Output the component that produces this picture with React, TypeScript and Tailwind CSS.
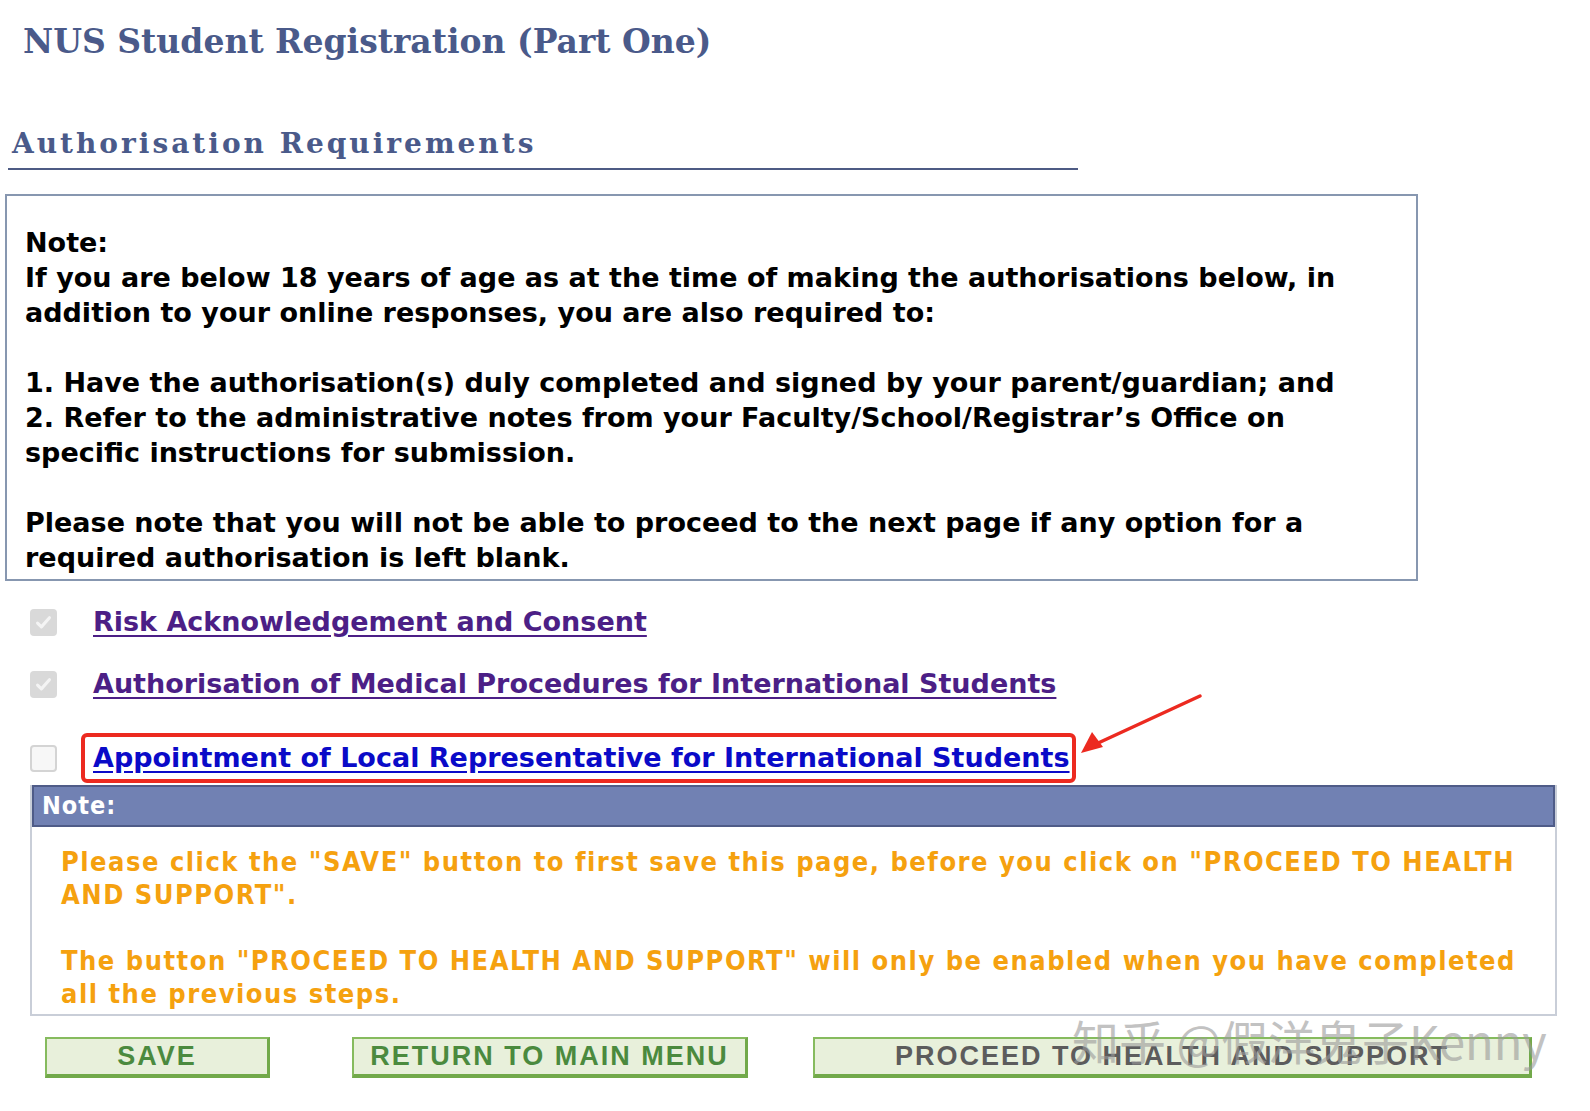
import React from 'react';

const verdana = { fontFamily: '"DejaVu Sans", Verdana, sans-serif' };
const georgia = { fontFamily: '"DejaVu Serif", Georgia, serif' };
const narrow = { fontFamily: '"DejaVu Sans Condensed", "DejaVu Sans", sans-serif' };

interface Item {
  label: string;
  done: boolean;
  highlight?: boolean;
}

const items: Item[] = [
  { label: 'Risk Acknowledgement and Consent', done: true },
  { label: 'Authorisation of Medical Procedures for International Students', done: true },
  { label: 'Appointment of Local Representative for International Students', done: false, highlight: true },
];

const CheckBox: React.FC<{ checked: boolean }> = ({ checked }) =>
  checked ? (
    <span className="flex h-[27px] w-[27px] items-center justify-center rounded-[4px] bg-[#d9d9d9]">
      <svg width="19" height="19" viewBox="0 0 16 16" fill="none">
        <path d="M3 8.5l3.2 3.2L13 4" stroke="#f4f4f4" strokeWidth="2.6" strokeLinecap="round" strokeLinejoin="round" />
      </svg>
    </span>
  ) : (
    <span className="block h-[27px] w-[27px] rounded-[4px] border-2 border-[#d4d4d4] bg-[#f7f7f7]" />
  );

const Btn: React.FC<{ label: string; w: string; disabled?: boolean }> = ({ label, w, disabled }) => (
  <div
    className={`flex h-[41px] ${w} items-center justify-center border-2 border-b-[4px] border-r-[3px] border-[#86bb5e] border-b-[#72a94a] border-r-[#72a94a] bg-[#e8f0db] text-[27px] font-bold tracking-[2px] ${
      disabled ? 'text-[#5c5c5c]' : 'text-[#4b8a3e]'
    }`}
    style={{ fontFamily: '"Liberation Sans Narrow", "Liberation Sans", Arial, sans-serif' }}
  >
    {label}
  </div>
);

export default function App() {
  return (
    <div className="relative h-[1111px] w-[1590px] overflow-hidden bg-white">
      <h1 className="pl-[23px] pt-[18px] text-[33px] font-bold leading-[48px] text-[#4a5a8a]" style={georgia}>
        NUS Student Registration (Part One)
      </h1>

      <h2
        className="mt-[58px] pl-[12px] text-[28px] font-bold leading-[40px] tracking-[3px] text-[#4a5a8a]"
        style={georgia}
      >
        Authorisation Requirements
      </h2>
      <div className="ml-[8px] mt-[4px] h-[2px] w-[1070px] bg-[#4e5b84]" />

      <div
        className="ml-[5px] mt-[24px] w-[1413px] border-2 border-[#8797b0] px-[18px] pb-[4px] pt-[29px] text-[27px] font-bold leading-[35px] text-black"
        style={verdana}
      >
        <p>Note:</p>
        <p>
          If you are below 18 years of age as at the time of making the authorisations below, in addition to your
          online responses, you are also required to:
        </p>
        <p className="mt-[35px]">1. Have the authorisation(s) duly completed and signed by your parent/guardian; and</p>
        <p>
          2. Refer to the administrative notes from your Faculty/School/Registrar’s Office on specific instructions for
          submission.
        </p>
        <p className="mt-[35px]">
          Please note that you will not be able to proceed to the next page if any option for a required authorisation
          is left blank.
        </p>
      </div>

      <div className="mt-[18px] flex flex-col gap-[16px] pl-[30px]" style={verdana}>
        {items.map(item => (
          <div key={item.label} className={`flex items-center ${item.highlight ? 'h-[50px] mt-[10px]' : 'h-[46px]'}`}>
            <CheckBox checked={item.done} />
            {item.highlight ? (
              <div className="ml-[24px] flex h-[50px] items-center rounded-[6px] border-[4px] border-[#ec2a20] pl-[8px] pr-[2px]">
                <a href="#" className="text-[27px] font-bold text-[#0a0ac8] underline underline-offset-[4px]">
                  {item.label}
                </a>
              </div>
            ) : (
              <a href="#" className="ml-[36px] text-[27px] font-bold text-[#4c1f86] underline underline-offset-[4px]">
                {item.label}
              </a>
            )}
          </div>
        ))}
      </div>

      <div className="ml-[30px] mt-[2px] w-[1527px] border-2 border-t-0 border-[#c9ced8]">
        <div
          className="flex h-[42px] items-center border-2 border-[#4f5c88] bg-[#7181b3] pl-[8px] text-[25px] font-bold tracking-[1px] text-white"
          style={narrow}
        >
          Note:
        </div>
        <div
          className="pb-[4px] pl-[29px] pr-[6px] pt-[18px] text-[27px] font-bold leading-[33px] tracking-[1.5px] text-[#f5a10f]"
          style={narrow}
        >
          <p>
            Please click the "SAVE" button to first save this page, before you click on "PROCEED TO HEALTH AND
            SUPPORT".
          </p>
          <p className="mt-[33px]">
            The button "PROCEED TO HEALTH AND SUPPORT" will only be enabled when you have completed all the previous
            steps.
          </p>
        </div>
      </div>

      <div className="mt-[21px] flex pl-[45px]">
        <Btn label="SAVE" w="w-[225px]" />
        <div className="ml-[82px]">
          <Btn label="RETURN TO MAIN MENU" w="w-[396px]" />
        </div>
        <div className="ml-[65px]">
          <Btn label="PROCEED TO HEALTH AND SUPPORT" w="w-[719px]" disabled />
        </div>
      </div>

      <svg className="pointer-events-none absolute left-[1070px] top-[684px]" width="140" height="80" viewBox="0 0 140 80">
        <path d="M130 12 L26 60" stroke="#ec2a20" strokeWidth="3.5" strokeLinecap="round" />
        <path d="M11 69 L22 48 L33 63 Z" fill="#ec2a20" />
      </svg>

      <div
        className="pointer-events-none absolute left-[1072px] top-[1010px] text-[47px] leading-[60px] text-[#9a9a9a] opacity-60"
        style={{ fontFamily: '"Noto Sans CJK SC", "Noto Sans", sans-serif' }}
      >
        知乎 @假洋鬼子Kenny
      </div>
    </div>
  );
}
